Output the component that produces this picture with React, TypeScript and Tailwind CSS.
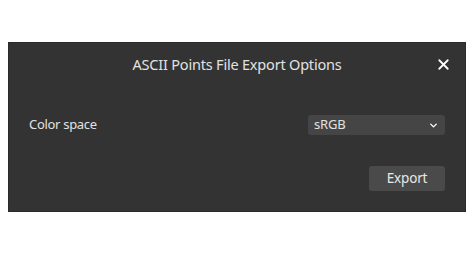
import { ChevronDown, X } from "lucide-react";

export default function App() {
  return (
    <div className="min-h-screen bg-white pt-[42px] pl-[8px]" style={{ fontFamily: '"Noto Sans", "Open Sans", sans-serif' }}>
      <div className="flex w-[458px] h-[170px] flex-col bg-[#333333] border border-[#2a2a2a] text-[#e2e2e2]">
        {/* Title bar */}
        <div className="grid h-[43px] grid-cols-[1fr_auto_1fr] items-center">
          <div />
          <span className="text-[14.5px] tracking-[-0.2px]">ASCII Points File Export Options</span>
          <div className="flex justify-end pr-[13px]">
            <X className="h-[17px] w-[17px] text-white" strokeWidth={2.5} />
          </div>
        </div>

        {/* Options */}
        <div className="mt-[29px] flex items-center justify-between px-[20px]">
          <span className="text-[13px] tracking-[-0.3px]">Color space</span>
          <div className="flex h-[20px] w-[137px] items-center justify-between rounded-[3px] bg-[#454545] pl-[6px] pr-[6px]">
            <span className="text-[13px] tracking-[-0.2px]">sRGB</span>
            <ChevronDown className="h-[11px] w-[11px] text-white" strokeWidth={3} />
          </div>
        </div>

        {/* Footer */}
        <div className="mt-[31px] flex justify-end px-[20px]">
          <button className="flex h-[25px] w-[76px] items-center justify-center rounded-[3px] bg-[#4a4a4a] text-[13.5px] tracking-[-0.2px] text-[#e8e8e8]">
            Export
          </button>
        </div>
      </div>
    </div>
  );
}
